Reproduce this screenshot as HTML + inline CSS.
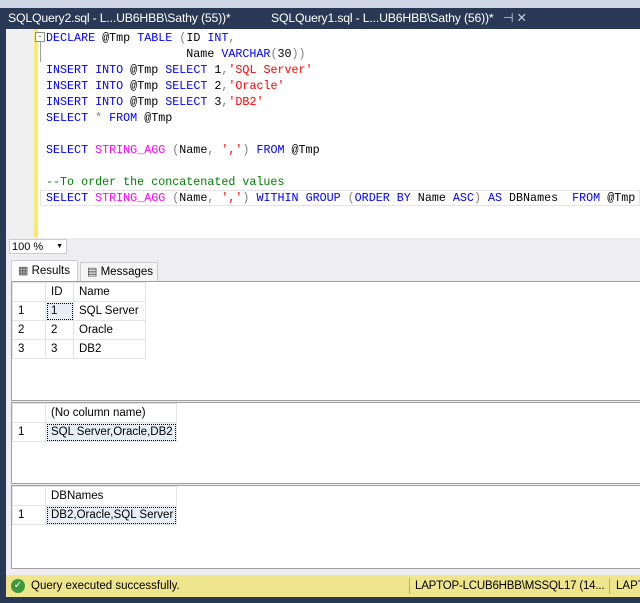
<!DOCTYPE html>
<html><head><style>
body{margin:0;width:640px;height:603px;overflow:hidden;background:#293955;font-family:"Liberation Sans",sans-serif;position:relative}
.abs{position:absolute}
.k{color:#0000ff}.s{color:#ff0000}.f{color:#ff00ff}.g{color:#808080}.c{color:#008000}
#code{left:46px;top:30px;font-family:"Liberation Mono",monospace;font-size:11.7px;line-height:16px;white-space:pre;color:#000}
.grid{background:#fff;border:1px solid #a0a0a0;font-size:11.5px}
table{border-collapse:collapse;position:absolute;left:0;top:0;table-layout:fixed}
td{border:1px solid #e4e4e4;height:19px;padding:0 0 0 5px;color:#000;white-space:nowrap;overflow:hidden;box-sizing:border-box}
.sel{outline:1px dotted #000;outline-offset:-2px;background:#e8eef6}
</style></head><body>
<div class="abs" style="left:0;top:0;width:640px;height:8px;background:#cfd6e5"></div>
<div class="abs" style="left:0;top:8px;width:640px;height:21px;background:#293955"></div>
<div class="abs" style="left:8px;top:11px;color:#fff;font-size:12.3px;letter-spacing:-0.2px">SQLQuery2.sql - L...UB6HBB\Sathy (55))*</div>
<div class="abs" style="left:271px;top:11px;color:#fff;font-size:12.3px;letter-spacing:-0.2px">SQLQuery1.sql - L...UB6HBB\Sathy (56))* <span style="color:#c8d0dc;margin-left:6px">⊣ ✕</span></div>
<div class="abs" style="left:6px;top:29px;width:634px;height:209px;background:#fff"></div>
<div class="abs" style="left:6px;top:29px;width:28px;height:209px;background:#f0f0f0"></div>
<div class="abs" style="left:34px;top:29px;width:4px;height:209px;background:#f8ec70"></div>
<div class="abs" style="left:35px;top:32px;width:8px;height:8px;border:1px solid #909090;background:#fff;font-size:9px;line-height:7px;text-align:center;color:#555">-</div>
<div class="abs" style="left:40px;top:42px;width:1px;height:20px;background:#a0a0a0"></div>
<div class="abs" style="left:40px;top:190px;width:600px;height:16px;border:1px solid #e4e4e4;box-sizing:border-box"></div>
<div id="code" class="abs"><span class="k">DECLARE</span> @Tmp <span class="k">TABLE</span> <span class="g">(</span>ID <span class="k">INT</span><span class="g">,</span>
                    Name <span class="k">VARCHAR</span><span class="g">(</span>30<span class="g">))</span>
<span class="k">INSERT</span> <span class="k">INTO</span> @Tmp <span class="k">SELECT</span> 1<span class="g">,</span><span class="s">'SQL Server'</span>
<span class="k">INSERT</span> <span class="k">INTO</span> @Tmp <span class="k">SELECT</span> 2<span class="g">,</span><span class="s">'Oracle'</span>
<span class="k">INSERT</span> <span class="k">INTO</span> @Tmp <span class="k">SELECT</span> 3<span class="g">,</span><span class="s">'DB2'</span>
<span class="k">SELECT</span> <span class="g">*</span> <span class="k">FROM</span> @Tmp

<span class="k">SELECT</span> <span class="f">STRING_AGG</span> <span class="g">(</span>Name<span class="g">,</span> <span class="s">','</span><span class="g">)</span> <span class="k">FROM</span> @Tmp

<span class="c">--To order the concatenated values</span>
<span class="k">SELECT</span> <span class="f">STRING_AGG</span> <span class="g">(</span>Name<span class="g">,</span> <span class="s">','</span><span class="g">)</span> <span class="k">WITHIN</span> <span class="k">GROUP</span> <span class="g">(</span><span class="k">ORDER</span> <span class="k">BY</span> Name <span class="k">ASC</span><span class="g">)</span> <span class="k">AS</span> DBNames  <span class="k">FROM</span> @Tmp</div>
<div class="abs" style="left:6px;top:238px;width:634px;height:18px;background:#eeeef2"></div>
<div class="abs" style="left:9px;top:239px;width:58px;height:15px;background:#fff;border:1px solid #ccc;font-size:11px;line-height:14px;padding-left:2px;box-sizing:border-box">100 %<span style="position:absolute;right:3px;font-size:7px">▼</span></div>
<div class="abs" style="left:6px;top:256px;width:634px;height:319px;background:#eeeef2"></div>
<div class="abs" style="left:11px;top:260px;width:67px;height:22px;background:#fff;border:1px solid #ccc;border-bottom:none;font-size:11.5px;line-height:20px;box-sizing:border-box;padding-left:6px"><span style="font-size:11px;color:#444">▦</span> Results</div>
<div class="abs" style="left:80px;top:262px;width:78px;height:20px;background:#f5f5f5;border:1px solid #ccc;font-size:11.5px;line-height:18px;box-sizing:border-box;padding-left:6px"><span style="font-size:11px;color:#444">▤</span> Messages</div>
<div class="abs grid" style="left:11px;top:281px;width:640px;height:118px">
<table><tr><td style="width:33px"></td><td style="width:28px">ID</td><td style="width:72px">Name</td></tr>
<tr><td>1</td><td class="sel">1</td><td>SQL Server</td></tr>
<tr><td>2</td><td>2</td><td>Oracle</td></tr>
<tr><td>3</td><td>3</td><td>DB2</td></tr></table></div>
<div class="abs grid" style="left:11px;top:402px;width:640px;height:80px">
<table><tr><td style="width:33px"></td><td style="width:131px">(No column name)</td></tr>
<tr><td>1</td><td class="sel">SQL Server,Oracle,DB2</td></tr></table></div>
<div class="abs grid" style="left:11px;top:485px;width:640px;height:82px">
<table><tr><td style="width:33px"></td><td style="width:131px">DBNames</td></tr>
<tr><td>1</td><td class="sel">DB2,Oracle,SQL Server</td></tr></table></div>
<div class="abs" style="left:6px;top:575px;width:634px;height:22px;background:#efe58c;font-size:11.5px;line-height:22px;white-space:nowrap;overflow:hidden">
<span style="position:absolute;left:5px;top:4px;width:14px;height:14px;border-radius:50%;background:#3c9a3c;color:#fff;font-size:10px;line-height:14px;text-align:center">✓</span>
<span style="position:absolute;left:25px">Query executed successfully.</span>
<span style="position:absolute;left:403px;top:3px;height:16px;border-left:1px solid #b8ae60"></span>
<span style="position:absolute;left:409px;letter-spacing:-0.2px">LAPTOP-LCUB6HBB\MSSQL17 (14...</span>
<span style="position:absolute;left:603px;top:3px;height:16px;border-left:1px solid #b8ae60"></span>
<span style="position:absolute;left:610px">LAPT</span></div>
</body></html>
